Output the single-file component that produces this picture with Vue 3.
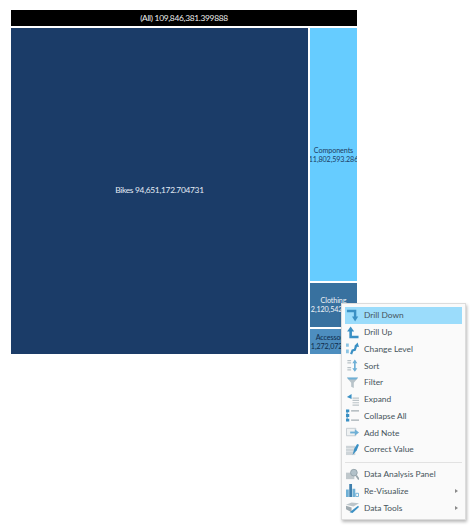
<script setup>
const menuTop = [
  { label: 'Drill Down', icon: 'down', active: true },
  { label: 'Drill Up', icon: 'up' },
  { label: 'Change Level', icon: 'level' },
  { label: 'Sort', icon: 'sort' },
  { label: 'Filter', icon: 'filter' },
  { label: 'Expand', icon: 'expand' },
  { label: 'Collapse All', icon: 'collapse' },
  { label: 'Add Note', icon: 'note' },
  { label: 'Correct Value', icon: 'correct' },
]
const menuBottom = [
  { label: 'Data Analysis Panel', icon: 'panel' },
  { label: 'Re-Visualize', icon: 'viz', more: true },
  { label: 'Data Tools', icon: 'tools', more: true },
]
</script>

<template>
  <div class="page">
    <div class="map">
      <div class="all">(All) 109,846,381.399888</div>
      <div class="body">
        <div class="bikes">Bikes 94,651,172.704731</div>
        <div class="side">
          <div class="tile comp"><span>Components</span><span>11,802,593.286</span></div>
          <div class="tile cloth"><span>Clothing</span><span>2,120,542.525</span></div>
          <div class="tile acc"><span>Accessories</span><span>1,272,072.884</span></div>
        </div>
      </div>
    </div>

    <div class="menu">
      <div class="group">
        <div v-for="m in menuTop" :key="m.label" class="item" :class="{ active: m.active }">
          <svg class="ico" viewBox="0 0 14 14">
            <template v-if="m.icon === 'down'">
              <path d="M1 2.2h8.8V9" fill="none" stroke="#3a90c4" stroke-width="2.6" />
              <path d="M6.5 8h6.6L9.8 13.5z" fill="#3a90c4" />
            </template>
            <template v-else-if="m.icon === 'up'">
              <path d="M5 5v6.8h8.5" fill="none" stroke="#3a90c4" stroke-width="2.8" />
              <path d="M1.2 6h7.6L5 .5z" fill="#3a90c4" />
            </template>
            <template v-else-if="m.icon === 'level'">
              <path d="M0 1.5h3v3.5H0zM0 8h3v4H0z" fill="#8cc4e3" />
              <path d="M5.5 13 7 9l2.5-.5L11 4" fill="none" stroke="#3a90c4" stroke-width="2.4" />
              <path d="M8.8 4.5 12.5.5 14 5.5z" fill="#3a90c4" />
            </template>
            <template v-else-if="m.icon === 'sort'">
              <path d="M1.5 1h4v1.4h-4zM1.5 3.4h4v1.4h-4zM1.5 8.5h4v1.4h-4zM1.5 11h4v1.4h-4z" fill="#b8c1c6" />
              <path d="M9.5 2v10" stroke="#6fb0d6" stroke-width="1.8" />
              <path d="M6.8 4.5 9.5.5l2.7 4zM6.8 10l2.7 3.8 2.7-3.8z" fill="#6fb0d6" />
            </template>
            <template v-else-if="m.icon === 'filter'">
              <path d="M1 2h12L8.4 7.2V13L5.6 11.5V7.2z" fill="#b8c3c9" />
              <path d="M1 1.5h12l-2 2.4H3z" fill="#6fb0d6" />
            </template>
            <template v-else-if="m.icon === 'expand'">
              <path d="M6 1 1 4.3 6 6.5z" fill="#3a90c4" />
              <path d="M7 5.5h7M7 8h7M7 10.5h7M7 13h7" stroke="#bcc4c8" stroke-width="1.3" />
            </template>
            <template v-else-if="m.icon === 'collapse'">
              <path d="M1.2 1v12" stroke="#3a90c4" stroke-width="1" />
              <path d="M0 .5h3.5v3H0zM0 5.5h3.5v3H0zM0 10.5h3.5v3H0z" fill="#3a90c4" />
              <path d="M5.5 2h8.5M5.5 12h8.5" stroke="#a3adb3" stroke-width="1.4" />
            </template>
            <template v-else-if="m.icon === 'note'">
              <path d="M.5 2.5h10v8H.5z" fill="#eef1f2" stroke="#c3cacf" />
              <path d="M4.5 7h5.5" stroke="#6fb0d6" stroke-width="2" />
              <path d="M9.5 3.5 14 7l-4.5 3.5z" fill="#6fb0d6" />
            </template>
            <template v-else-if="m.icon === 'correct'">
              <path d="M0 3h10v10H0z" fill="#cdd4d8" />
              <path d="M0 6h10M0 9h10" stroke="#e6eaec" stroke-width=".8" />
              <path d="M7 13 9 6l3-5 2 1-2.5 6z" fill="#3a90c4" />
            </template>
          </svg>
          <span>{{ m.label }}</span>
        </div>
      </div>
      <div class="sep"></div>
      <div class="group">
        <div v-for="m in menuBottom" :key="m.label" class="item">
          <svg class="ico" viewBox="0 0 14 14">
            <template v-if="m.icon === 'panel'">
              <path d="M0 5h9v7H0z" fill="#c0c8cc" />
              <circle cx="8.5" cy="5" r="3.6" fill="#b2c1c9" stroke="#94a3ab" />
              <path d="M11 8l3 4.5" stroke="#9aa6ac" stroke-width="2" />
            </template>
            <template v-else-if="m.icon === 'viz'">
              <path d="M0 6h3v8H0zM7 5h3v9H7z" fill="#6fb0d6" />
              <path d="M3.5 0h3v14h-3z" fill="#3f80ae" />
              <path d="M10.5 10h3v3.5h-3z" fill="none" stroke="#6fb0d6" />
            </template>
            <template v-else>
              <path d="M0 4 6 1.5l8 1L8 6z" fill="#bcc5ca" />
              <path d="M0 5l6 2v5L0 9z" fill="#a0abb1" />
              <path d="M4 12l9-7 1 1.5L7 13z" fill="#3a90c4" />
            </template>
          </svg>
          <span class="grow">{{ m.label }}</span>
          <i v-if="m.more" class="caret"></i>
        </div>
      </div>
    </div>
  </div>
</template>

<style scoped>
.page {
  position: relative;
  width: 474px;
  height: 529px;
  padding: 10px 0 0 11px;
  box-sizing: border-box;
  background: #fff;
  font-family: Lato, "Open Sans", sans-serif;
  overflow: hidden;
}
.map {
  width: 346px;
  display: flex;
  flex-direction: column;
  gap: 2px;
}
.all {
  height: 16px;
  line-height: 16px;
  background: #000;
  color: #eee;
  text-align: center;
  font-size: 8.4px;
  letter-spacing: -0.3px;
}
.body {
  display: flex;
  gap: 2px;
  height: 326px;
}
.bikes {
  width: 297px;
  background: #1b3c68;
  color: #e3ebf5;
  font-size: 8.4px;
  letter-spacing: -0.3px;
  display: flex;
  align-items: center;
  justify-content: center;
  padding-bottom: 2px;
  box-sizing: border-box;
}
.side {
  flex: 1;
  min-width: 0;
  display: flex;
  flex-direction: column;
  gap: 2px;
}
.tile {
  display: flex;
  flex-direction: column;
  align-items: center;
  justify-content: center;
  font-size: 7.2px;
  letter-spacing: -0.1px;
  line-height: 9px;
  overflow: hidden;
  white-space: nowrap;
}
.comp {
  height: 253px;
  background: #66ccff;
  color: #1d3d63;
}
.cloth {
  height: 44px;
  background: #38719f;
  color: #f0f4f8;
}
.acc {
  flex: 1;
  background: #4d8ebf;
  color: #0f2c4c;
}
.menu {
  position: absolute;
  left: 341px;
  top: 303px;
  width: 125px;
  height: 217px;
  box-sizing: border-box;
  padding: 3px 3px 0 3px;
  background: #fafafa;
  border: 1px solid #dcdcdc;
  box-shadow: 1px 2px 3px rgba(0, 0, 0, 0.28);
  color: #46545c;
  font-size: 8.4px;
}
.item {
  height: 16.75px;
  display: flex;
  align-items: center;
  padding-left: 1px;
  gap: 5px;
}
.item.active {
  background: #9bdcfb;
}
.ico {
  width: 13px;
  height: 13px;
  flex: none;
}
.grow {
  flex: 1;
}
.caret {
  width: 0;
  height: 0;
  margin-right: 4px;
  border-left: 3px solid #8a8a8a;
  border-top: 2.5px solid transparent;
  border-bottom: 2.5px solid transparent;
}
.sep {
  height: 1px;
  background: #e2e2e2;
  margin: 4px 0 3px 0;
}
</style>
